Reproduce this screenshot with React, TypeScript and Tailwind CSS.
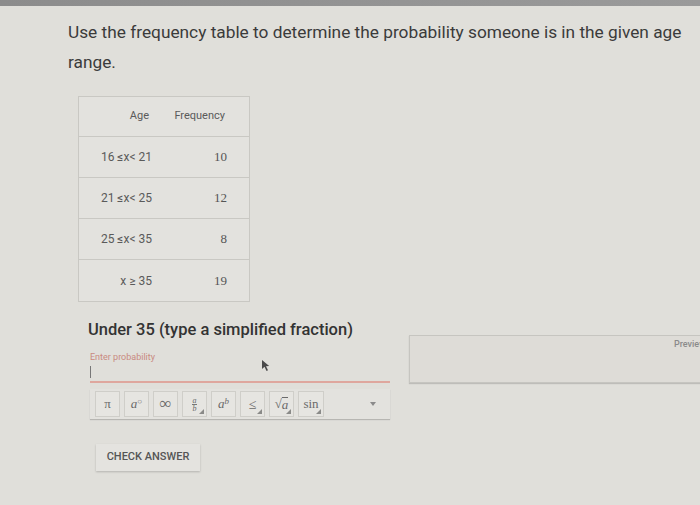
import React from "react";

const rows = [
  { age: "16 ≤x< 21", freq: "10" },
  { age: "21 ≤x< 25", freq: "12" },
  { age: "25 ≤x< 35", freq: "8" },
  { age: "x ≥ 35", freq: "19" },
];

function Corner() {
  return (
    <span className="absolute bottom-[2px] right-[2px] h-0 w-0 border-b-[5px] border-l-[5px] border-b-[#8a8a88] border-l-transparent" />
  );
}

function ToolButton({
  children,
  corner,
  w = "w-[25px]",
}: {
  children: React.ReactNode;
  corner?: boolean;
  w?: string;
}) {
  return (
    <div
      className={`relative flex h-[26px] ${w} items-center justify-center border border-[#cfcec9] bg-[#e6e5e1] text-[#6a6a6a] [font-family:'Liberation_Serif',serif]`}
    >
      {children}
      {corner ? <Corner /> : null}
    </div>
  );
}

export default function App() {
  return (
    <div className="relative h-[505px] w-[700px] overflow-hidden bg-[#e0dfda] [font-family:Roboto,'Liberation_Sans',sans-serif]">
      <div className="h-[6px] bg-gradient-to-r from-[#8c8c8c] to-[#9a9a9a]" />

      <div className="pl-[68px] pr-[8px] pt-[11px]">
        <p className="text-[17.3px] leading-[30px] text-[#3b3b3b]">
          Use the frequency table to determine the probability someone is in the given age range.
        </p>

        {/* frequency table */}
        <div className="ml-[10px] mt-[19px] w-[172px] border border-[#c9c8c3] bg-[#e3e2de] text-[#5a5a5a]">
          <div className="flex h-[40px] items-center border-b border-[#c9c8c3] text-[11px]">
            <div className="w-[87px] pr-[17px] text-right">Age</div>
            <div className="flex-1 pr-[24px] text-right">Frequency</div>
          </div>
          {rows.map((r, i) => (
            <div
              key={r.age}
              className={`flex h-[41px] items-center ${i < rows.length - 1 ? "border-b border-[#c9c8c3]" : ""}`}
            >
              <div className="w-[87px] pr-[14px] text-right text-[12px]">{r.age}</div>
              <div className="flex-1 pr-[22px] text-right text-[13px] text-[#555555] [font-family:'Liberation_Serif',serif]">
                {r.freq}
              </div>
            </div>
          ))}
        </div>
      </div>

      {/* answer area */}
      <div className="mt-[17px] flex pl-[88px]">
        <div className="w-[302px] shrink-0">
          <h2 className="text-[16.5px] font-medium leading-[22px] text-[#333333]">
            Under 35 (type a simplified fraction)
          </h2>
          <div className="ml-[2px] mt-[10px] text-[9px] leading-[12px] text-[#c98a80]">
            Enter probability
          </div>
          <div className="ml-[2px] mt-[3px] h-[12px] w-px bg-[#777777]" />
          <div className="ml-[2px] mt-[3px] h-[2px] bg-[#dfa79e]" />

          <div className="ml-[2px] mt-[6px] flex h-[30px] items-center gap-[4px] bg-[#e3e2de] pl-[5px] pr-[14px] shadow-[0_1px_1px_rgba(0,0,0,0.18)]">
            <ToolButton>
              <span className="text-[13px]">π</span>
            </ToolButton>
            <ToolButton>
              <span className="text-[13px] italic">
                a<sup className="text-[8px] not-italic">○</sup>
              </span>
            </ToolButton>
            <ToolButton>
              <span className="text-[17px]">∞</span>
            </ToolButton>
            <ToolButton corner>
              <span className="flex flex-col items-center text-[8px] italic leading-[7px]">
                <span>a</span>
                <span className="h-px w-[5px] bg-[#777]" />
                <span>b</span>
              </span>
            </ToolButton>
            <ToolButton>
              <span className="text-[13px] italic">
                a<sup className="text-[9px]">b</sup>
              </span>
            </ToolButton>
            <ToolButton corner>
              <span className="text-[14px]">≤</span>
            </ToolButton>
            <ToolButton corner>
              <span className="flex items-center text-[13px]">
                √<span className="border-t border-[#6a6a6a] italic leading-[13px]">a</span>
              </span>
            </ToolButton>
            <ToolButton corner w="w-[26px]">
              <span className="text-[13px]">sin</span>
            </ToolButton>
            <div className="flex flex-1 justify-end">
              <span className="h-0 w-0 border-x-[3px] border-t-[4px] border-x-transparent border-t-[#8a8a8a]" />
            </div>
          </div>

          <button className="ml-[8px] mt-[25px] flex h-[27px] w-[104px] items-center justify-center bg-[#e4e3df] text-[11px] font-medium text-[#555555] shadow-[0_1px_2px_rgba(0,0,0,0.2)]">
            CHECK ANSWER
          </button>
        </div>

        <div className="ml-[19px] mt-[16px] h-[48px] w-[320px] shrink-0 border border-[#c6c5c0] bg-[#dedcd7] shadow-[0_1px_1px_rgba(0,0,0,0.15)]">
          <div className="pl-[264px] pt-[2px] text-[9px] font-medium text-[#8a8a8a]">Preview</div>
        </div>
      </div>

      {/* mouse pointer */}
      <svg className="absolute left-[261px] top-[359px]" width="9" height="13" viewBox="0 0 9 13">
        <path d="M1 1 L1 10 L3.5 7.8 L5.5 12 L7 11.3 L5 7.2 L8.2 7 Z" fill="#4a4a4a" />
      </svg>
    </div>
  );
}
